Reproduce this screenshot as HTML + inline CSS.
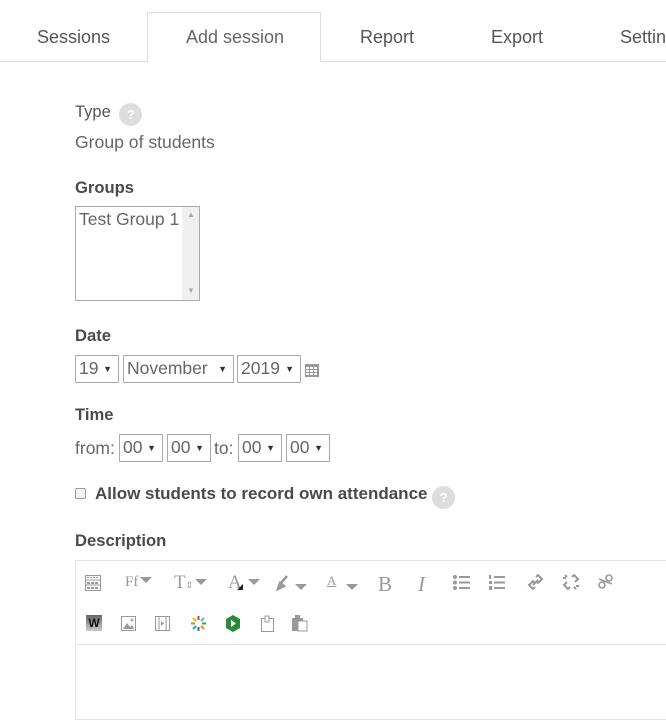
<!DOCTYPE html>
<html><head><meta charset="utf-8"><style>
*{margin:0;padding:0;box-sizing:border-box}
body{width:666px;height:711px;overflow:hidden;background:#fff;font-family:"Liberation Sans",Roboto,sans-serif;color:#666;position:relative}
.a{position:absolute;white-space:nowrap}
.tab{position:absolute;top:27px;font-size:18px;color:#555}
.lbl{font-size:16.6px;font-weight:bold;color:#4a4a4a}
.sel{position:absolute;height:28px;border:1px solid #aaa;font-size:17.5px;color:#666;padding:2px 0 0 3px;background:#fff}
.sel i{position:absolute;right:6px;top:8px;font-style:normal;font-size:9px;color:#333}
.help{display:inline-block;width:23px;height:23px;border-radius:50%;background:#ddd;color:#fff;font-weight:bold;font-size:13px;text-align:center;line-height:23px}
.ic{position:absolute;color:#999;font-size:17px}
.dd{display:inline-block;width:0;height:0;border-left:6px solid transparent;border-right:6px solid transparent;border-top:6px solid #999;vertical-align:3px;margin-left:2px}
</style></head><body>
<div class="a" style="left:0;top:61px;width:666px;height:1px;background:#ddd"></div>
<div class="a" style="left:147px;top:12px;width:174px;height:50px;border:1px solid #ddd;border-bottom:none;background:#fff"></div>
<div class="tab" style="left:37px">Sessions</div>
<div class="tab" style="left:186px;color:#666">Add session</div>
<div class="tab" style="left:360px">Report</div>
<div class="tab" style="left:491px">Export</div>
<div class="tab" style="left:620px">Settings</div>

<div class="a" style="left:75px;top:103px;font-size:16.5px;color:#555">Type <span class="help" style="vertical-align:-2px;margin-left:4px">?</span></div>
<div class="a" style="left:75px;top:132px;font-size:17.6px">Group of students</div>

<div class="a lbl" style="left:75px;top:178px">Groups</div>
<div class="a" style="left:75px;top:206px;width:125px;height:95px;border:1px solid #aaa">
 <div class="a" style="left:3px;top:2px;font-size:17.5px">Test Group 1</div>
 <div class="a" style="left:106px;top:0;width:17px;height:93px;background:#f0f0f0"></div>
 <div class="a" style="left:111px;top:3px;font-size:8px;color:#aaa">▲</div>
 <div class="a" style="left:111px;top:79px;font-size:8px;color:#aaa">▼</div>
</div>

<div class="a lbl" style="left:75px;top:326px">Date</div>
<div class="sel" style="left:75px;top:355px;width:44px">19<i>▼</i></div>
<div class="sel" style="left:123px;top:355px;width:111px">November<i>▼</i></div>
<div class="sel" style="left:237px;top:355px;width:64px">2019<i>▼</i></div>
<svg class="a" style="left:305px;top:362px" width="14" height="15"><rect x="0" y="2" width="14" height="13" fill="#999"/><g fill="#fff"><rect x="1" y="5" width="3" height="2"/><rect x="5" y="5" width="3" height="2"/><rect x="9" y="5" width="3" height="2"/><rect x="1" y="8" width="3" height="2"/><rect x="5" y="8" width="3" height="2"/><rect x="9" y="8" width="3" height="2"/><rect x="1" y="11" width="3" height="2"/><rect x="5" y="11" width="3" height="2"/><rect x="9" y="11" width="3" height="2"/></g></svg>

<div class="a lbl" style="left:75px;top:405px">Time</div>
<div class="a" style="left:75px;top:438px;font-size:17.5px">from:</div>
<div class="sel" style="left:119px;top:434px;width:44px">00<i>▼</i></div>
<div class="sel" style="left:167px;top:434px;width:44px">00<i>▼</i></div>
<div class="a" style="left:214px;top:438px;font-size:17.5px">to:</div>
<div class="sel" style="left:238px;top:434px;width:44px">00<i>▼</i></div>
<div class="sel" style="left:286px;top:434px;width:44px">00<i>▼</i></div>

<div class="a" style="left:75px;top:488px;width:11px;height:11px;border:1px solid #999;border-radius:2px;background:#f4f4f4"></div>
<div class="a lbl" style="left:95px;top:484px;font-size:17px">Allow students to record own attendance <span class="help" style="vertical-align:-3px;margin-left:0">?</span></div>

<div class="a lbl" style="left:75px;top:531px">Description</div>
<div class="a" style="left:75px;top:560px;width:600px;height:160px;border:1px solid #e5e5e5"></div>
<div class="a" style="left:76px;top:644px;width:600px;height:1px;background:#e5e5e5"></div>

<svg class="a" style="left:85px;top:575px" width="16" height="16"><rect x="0.5" y="0.5" width="15" height="15" fill="none" stroke="#999"/><path d="M0 5h16M0 10h16" stroke="#999"/><g fill="#999"><rect x="2" y="2" width="2" height="1"/><rect x="5" y="2" width="2" height="1"/><rect x="8" y="2" width="2" height="1"/><rect x="11" y="2" width="2" height="1"/><rect x="2" y="7" width="3" height="2"/><rect x="6" y="7" width="3" height="2"/><rect x="10" y="7" width="3" height="2"/><rect x="2" y="12" width="3" height="2"/><rect x="6" y="12" width="3" height="2"/><rect x="10" y="12" width="3" height="2"/></g></svg>
<div class="ic" style="left:125px;top:574px;font-size:15px;font-family:'Liberation Serif',serif">Ff<span class="dd"></span></div>
<div class="ic" style="left:174px;top:572px;font-family:'Liberation Serif',serif;font-size:19px">T<span style="font-size:9px">⇕</span><span class="dd"></span></div>
<div class="ic" style="left:228px;top:572px;font-family:'Liberation Serif',serif;font-size:19px">A<span class="dd" style="margin-left:6px"></span></div>
<div class="a" style="left:237px;top:584px;width:0;height:0;border-left:6px solid transparent;border-bottom:6px solid #222"></div>
<svg class="a" style="left:275px;top:575px" width="16" height="16"><path d="M3 14l2-6 4 3zM6 8l6-7" stroke="#999" stroke-width="2.5" fill="#999"/></svg>
<div class="a" style="left:293px;top:580px"><span class="dd"></span></div>
<div class="ic" style="left:327px;top:573px;font-family:'Liberation Serif',serif;font-size:13px;text-decoration:underline">A<span style="font-size:11px;color:#888;text-decoration:none"> </span></div>
<div class="a" style="left:344px;top:580px"><span class="dd"></span></div>
<div class="ic" style="left:378px;top:572px;font-family:'Liberation Serif',serif;font-size:21px">B</div>
<div class="ic" style="left:418px;top:572px;font-family:'Liberation Serif',serif;font-size:21px;font-style:italic">I</div>
<svg class="a" style="left:453px;top:575px" width="18" height="15"><g fill="#999"><circle cx="2" cy="2" r="2"/><circle cx="2" cy="7.5" r="2"/><circle cx="2" cy="13" r="2"/><rect x="6" y="1" width="11" height="2"/><rect x="6" y="6.5" width="11" height="2"/><rect x="6" y="12" width="11" height="2"/></g></svg>
<svg class="a" style="left:488px;top:575px" width="18" height="15"><g fill="#999"><rect x="6" y="1" width="11" height="2"/><rect x="6" y="6.5" width="11" height="2"/><rect x="6" y="12" width="11" height="2"/><rect x="1" y="0" width="2" height="4"/><rect x="1" y="6" width="3" height="3"/><rect x="1" y="11" width="3" height="4"/></g></svg>
<svg class="a" style="left:527px;top:574px" width="17" height="17" fill="none" stroke="#999" stroke-width="2"><path d="M9 3l2-2 4 4-4 4-2-2M8 13l-2 2-4-4 4-4 2 2M6 11l5-5"/></svg>
<svg class="a" style="left:562px;top:573px" width="18" height="18" fill="none" stroke="#999" stroke-width="2"><path d="M10 4l2-2 4 4-3 3M8 14l-2 2-4-4 3-3M3 2l2 2M1 5h3M14 16l-2-2M17 13h-3"/></svg>
<svg class="a" style="left:597px;top:573px" width="17" height="17" fill="none" stroke="#999" stroke-width="1.6"><circle cx="12" cy="5" r="3"/><circle cx="5" cy="12" r="3"/><path d="M2 6l13 5"/></svg>

<div class="a" style="left:86px;top:615px;width:16px;height:16px;background:linear-gradient(#666,#ccc);color:#111;font-weight:bold;font-size:12px;line-height:16px;text-align:center">W</div>
<svg class="a" style="left:121px;top:616px" width="15" height="15"><rect x="0.5" y="0.5" width="14" height="14" fill="#fff" stroke="#999"/><path d="M2 13l4-6 3 4 2-2 2 4z" fill="#999"/><circle cx="11" cy="4" r="1.3" fill="#999"/></svg>
<svg class="a" style="left:155px;top:616px" width="15" height="15"><rect x="0.5" y="0.5" width="14" height="14" fill="none" stroke="#999"/><path d="M4 0v15M11 0v15" stroke="#999"/><path d="M6 5l3 2.5-3 2.5z" fill="#999"/></svg>
<svg class="a" style="left:191px;top:616px" width="15" height="15" stroke-width="2"><path d="M7.5 0v4" stroke="#e33"/><path d="M7.5 11v4" stroke="#36c"/><path d="M0 7.5h4" stroke="#6b3"/><path d="M11 7.5h4" stroke="#3a5"/><path d="M2 2l3 3" stroke="#fb0"/><path d="M13 13l-3-3" stroke="#e80"/><path d="M13 2l-3 3" stroke="#3c9"/><path d="M2 13l3-3" stroke="#39c"/></svg>
<svg class="a" style="left:225px;top:615px" width="16" height="17"><path d="M8 0l7 4v9l-7 4-7-4V4z" fill="#2a8a3a"/><path d="M6 5l5 3.5-5 3.5z" fill="#fff"/></svg>
<svg class="a" style="left:261px;top:615px" width="13" height="17" fill="none" stroke="#999"><path d="M0.5 3.5h12v13h-12z"/><path d="M4 1h4v6H4z" fill="#fff"/></svg>
<svg class="a" style="left:292px;top:615px" width="16" height="17"><rect x="0" y="3" width="11" height="13" fill="#999"/><rect x="3" y="0" width="5" height="4" fill="#999"/><rect x="6" y="6" width="9" height="10" fill="#fff" stroke="#999"/></svg>
</body></html>
